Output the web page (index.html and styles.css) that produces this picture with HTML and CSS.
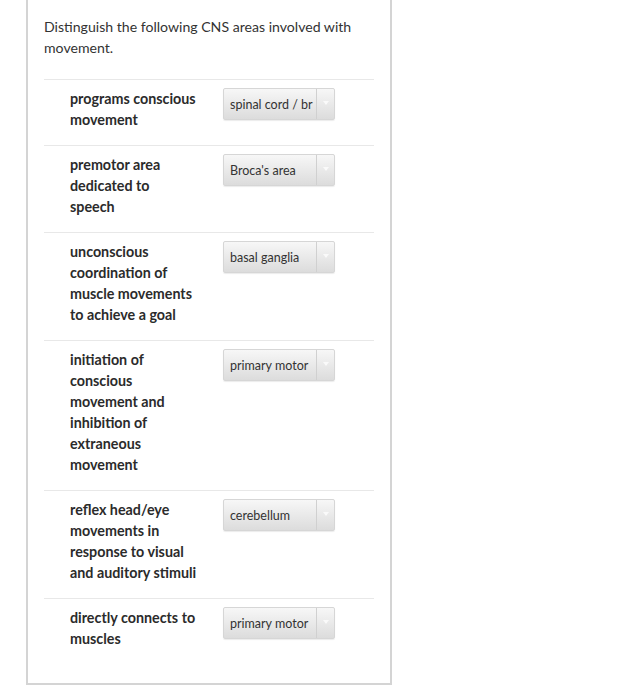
FILE: index.html
```html
<!DOCTYPE html>
<html>
<head>
<meta charset="utf-8">
<link rel="stylesheet" href="styles.css">
</head>
<body>
<div class="card">
  <p class="question">Distinguish the following CNS areas involved with<br>movement.</p>
  <div class="rows">
    <div class="row">
      <div class="label">programs conscious<br>movement</div>
      <div class="select"><span class="value">spinal cord / br</span><span class="arrow"><span class="tri"></span></span></div>
    </div>
    <div class="row">
      <div class="label">premotor area<br>dedicated to<br>speech</div>
      <div class="select"><span class="value">Broca's area</span><span class="arrow"><span class="tri"></span></span></div>
    </div>
    <div class="row">
      <div class="label">unconscious<br>coordination of<br>muscle movements<br>to achieve a goal</div>
      <div class="select"><span class="value">basal ganglia</span><span class="arrow"><span class="tri"></span></span></div>
    </div>
    <div class="row">
      <div class="label">initiation of<br>conscious<br>movement and<br>inhibition of<br>extraneous<br>movement</div>
      <div class="select"><span class="value">primary motor</span><span class="arrow"><span class="tri"></span></span></div>
    </div>
    <div class="row">
      <div class="label">reflex head/eye<br>movements in<br>response to visual<br>and auditory stimuli</div>
      <div class="select"><span class="value">cerebellum</span><span class="arrow"><span class="tri"></span></span></div>
    </div>
    <div class="row">
      <div class="label">directly connects to<br>muscles</div>
      <div class="select"><span class="value">primary motor</span><span class="arrow"><span class="tri"></span></span></div>
    </div>
  </div>
</div>
</body>
</html>
```

FILE: styles.css
```css
html, body {
  margin: 0;
  padding: 0;
  background: #fff;
}
body {
  font-family: Lato, "Open Sans", sans-serif;
  color: #333;
}
.card {
  margin-left: 26px;
  width: 366px;
  height: 685px;
  box-sizing: border-box;
  border: 2px solid #d4d4d4;
  border-top: none;
  padding-top: 16px;
}
.question {
  margin: 0;
  padding: 0 16px;
  font-size: 14.1px;
  line-height: 21px;
  color: #333;
}
.rows {
  margin: 21px 16px 0 16px;
}
.row {
  display: flex;
  align-items: flex-start;
  border-top: 1px solid #e8e8e8;
  padding: 8px 0 15px 26px;
}
.label {
  width: 140px;
  font-size: 14.3px;
  font-weight: bold;
  line-height: 21px;
  white-space: nowrap;
  color: #2b2b2b;
}
.select {
  margin-left: 13px;
  width: 112px;
  height: 32px;
  display: flex;
  box-sizing: border-box;
  border: 1px solid #d6d6d6;
  border-radius: 2px;
  background: linear-gradient(#f7f7f7, #dcdcdc);
  box-shadow: 0 1px 1px rgba(0,0,0,0.08);
}
.value {
  flex: 1;
  overflow: hidden;
  white-space: nowrap;
  font-size: 12.5px;
  line-height: 32px;
  padding-left: 6px;
  color: #333;
}
.arrow {
  width: 18px;
  border-left: 1px solid #d0d0d0;
  display: flex;
  justify-content: center;
  padding-top: 12px;
  box-sizing: border-box;
}
.tri {
  width: 0;
  height: 0;
  border-left: 3px solid transparent;
  border-right: 3px solid transparent;
  border-top: 4px solid #fafafa;
}
```
